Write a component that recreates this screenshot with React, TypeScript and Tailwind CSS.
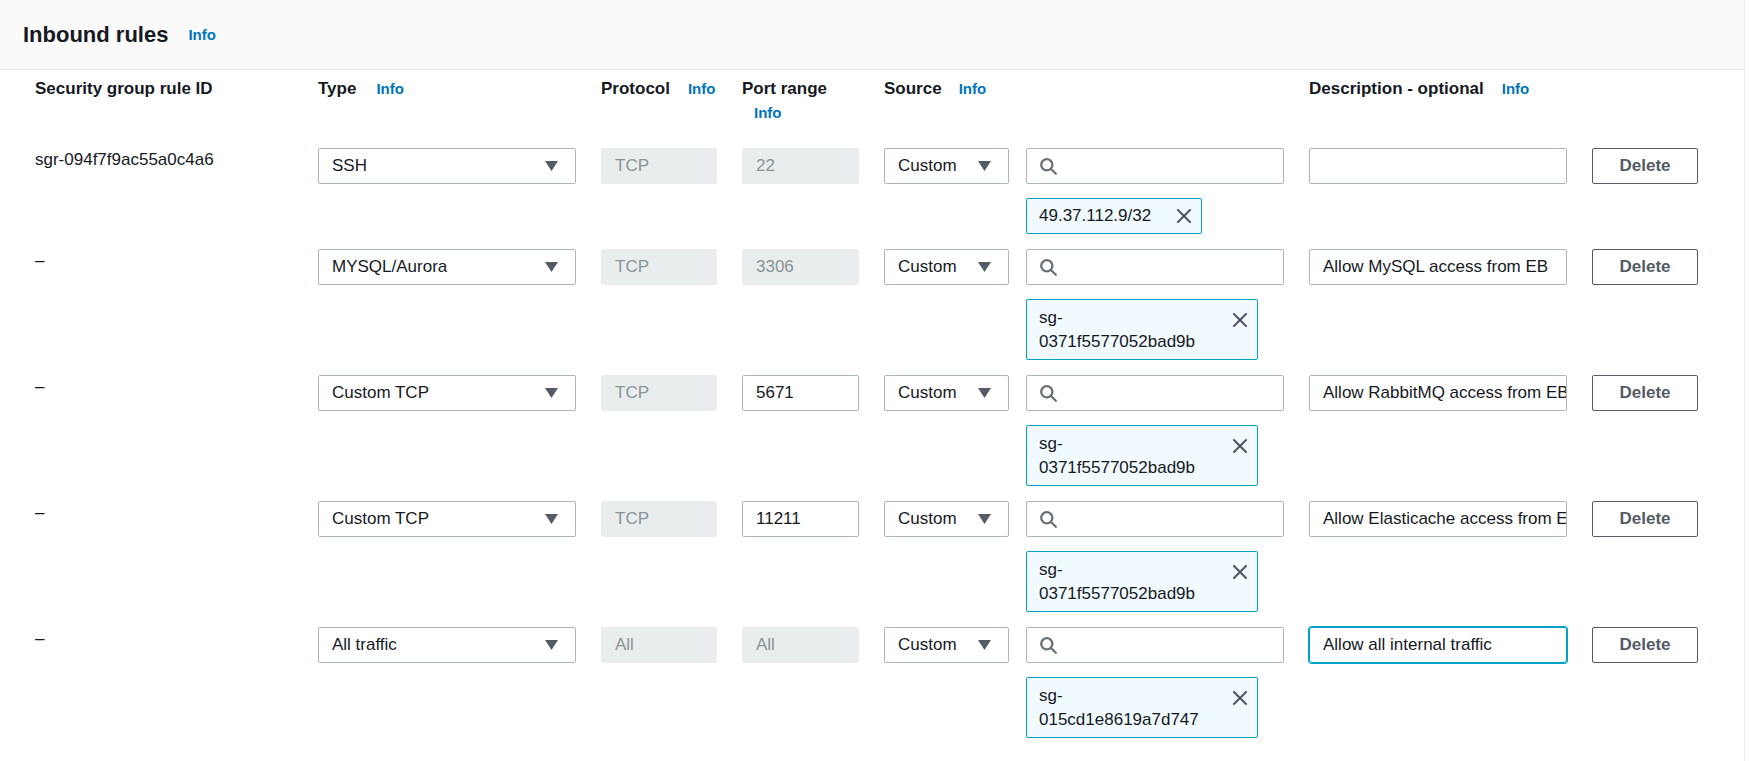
const rules = [
  { id: "sgr-094f7f9ac55a0c4a6", type: "SSH", protocol: "TCP", port: "22", portEditable: false, token: ["49.37.112.9/32"], desc: "", focused: false },
  { id: "–", type: "MYSQL/Aurora", protocol: "TCP", port: "3306", portEditable: false, token: ["sg-", "0371f5577052bad9b"], desc: "Allow MySQL access from EB", focused: false },
  { id: "–", type: "Custom TCP", protocol: "TCP", port: "5671", portEditable: true, token: ["sg-", "0371f5577052bad9b"], desc: "Allow RabbitMQ access from EB", focused: false },
  { id: "–", type: "Custom TCP", protocol: "TCP", port: "11211", portEditable: true, token: ["sg-", "0371f5577052bad9b"], desc: "Allow Elasticache access from EB", focused: false },
  { id: "–", type: "All traffic", protocol: "All", port: "All", portEditable: false, token: ["sg-", "015cd1e8619a7d747"], desc: "Allow all internal traffic", focused: true },
];

const grid = "grid grid-cols-[258px_258px_116px_117px_400px_258px_106px] gap-x-[25px]";

function Info({ className = "" }: { className?: string }) {
  return <span className={"text-[15px] font-bold text-[#0073bb] " + className}>Info</span>;
}

function Caret() {
  return (
    <svg width="13" height="10" viewBox="0 0 13 10" className="shrink-0">
      <polygon points="0,0 13,0 6.5,10" fill="#545b64" />
    </svg>
  );
}

function SearchIcon() {
  return (
    <svg width="19" height="19" viewBox="0 0 19 19" fill="none" stroke="#687078" strokeWidth="2.3" strokeLinecap="round">
      <circle cx="7.8" cy="7.8" r="5.6" />
      <line x1="12" y1="12" x2="16.8" y2="16.8" />
    </svg>
  );
}

function CloseIcon() {
  return (
    <svg width="16" height="16" viewBox="0 0 16 16" stroke="#545b64" strokeWidth="2.2" strokeLinecap="round" className="shrink-0">
      <line x1="2" y1="2" x2="14" y2="14" />
      <line x1="14" y1="2" x2="2" y2="14" />
    </svg>
  );
}

function Select({ value, width }: { value: string; width: string }) {
  return (
    <div className={"h-[36px] " + width + " border border-[#aab7b8] rounded-[2px] bg-white pl-[13px] pr-[17px] flex items-center justify-between"}>
      <span className="truncate">{value}</span>
      <Caret />
    </div>
  );
}

function Disabled({ value }: { value: string }) {
  return (
    <div className="h-[36px] rounded-[2px] bg-[#eaeded] border border-[#eaeded] px-[13px] flex items-center text-[#879596]">
      {value}
    </div>
  );
}

function Token({ lines }: { lines: string[] }) {
  if (lines.length === 1) {
    return (
      <div className="h-[36px] w-[176px] border border-[#00a1c9] rounded-[2px] bg-[#f1faff] pl-[12px] pr-[9px] flex items-center justify-between">
        <span>{lines[0]}</span>
        <CloseIcon />
      </div>
    );
  }
  return (
    <div className="h-[61px] w-[232px] border border-[#00a1c9] rounded-[2px] bg-[#f1faff] pl-[12px] pr-[9px] pt-[6px] flex justify-between">
      <div className="leading-[24px]">
        {lines.map((l, i) => (
          <div key={i}>{l}</div>
        ))}
      </div>
      <div className="pt-[6px]">
        <CloseIcon />
      </div>
    </div>
  );
}

export default function App() {
  return (
    <div className="min-h-screen bg-white text-[#16191f] text-[17px]" style={{ fontFamily: '"Liberation Sans", Arial, sans-serif' }}>
      <div className="w-[1745px] border-r border-[#eaeded] min-h-screen">
        <div className="h-[70px] bg-[#fafafa] border-b border-[#eaeded] px-[23px] flex items-center gap-[20px]">
          <h2 className="text-[22px] font-bold leading-none">Inbound rules</h2>
          <Info className="pt-[2px]" />
        </div>

        <div className={grid + " pl-[35px] pt-[7px] leading-[24px] font-bold"}>
          <div>Security group rule ID</div>
          <div className="flex items-baseline gap-[20px]">
            Type <Info />
          </div>
          <div className="flex items-baseline gap-[18px] whitespace-nowrap">
            Protocol <Info />
          </div>
          <div>
            <div>Port range</div>
            <Info className="ml-[12px]" />
          </div>
          <div className="flex items-baseline gap-[17px]">
            Source <Info />
          </div>
          <div className="flex items-baseline gap-[18px] whitespace-nowrap">
            Description - optional <Info />
          </div>
          <div />
        </div>

        <div className="pl-[35px] pt-[23px] flex flex-col gap-[15px]">
          {rules.map((r, i) => (
            <div key={i} className={grid + " items-start"}>
              <div className="leading-[24px]">{r.id}</div>
              <Select value={r.type} width="w-full" />
              <Disabled value={r.protocol} />
              {r.portEditable ? (
                <div className="h-[36px] border border-[#aab7b8] rounded-[2px] px-[13px] flex items-center">{r.port}</div>
              ) : (
                <Disabled value={r.port} />
              )}
              <div className="flex gap-[17px] items-start">
                <Select value="Custom" width="w-[125px]" />
                <div className="flex flex-col gap-[14px] w-[258px]">
                  <div className="h-[36px] border border-[#aab7b8] rounded-[2px] pl-[12px] flex items-center">
                    <SearchIcon />
                  </div>
                  <Token lines={r.token} />
                </div>
              </div>
              <div
                className={
                  "h-[36px] rounded-[2px] px-[13px] flex items-center overflow-hidden whitespace-nowrap " +
                  (r.focused
                    ? "border border-[#00a1c9] shadow-[0_0_0_1px_#00a1c9] rounded-[3px]"
                    : "border border-[#aab7b8]")
                }
              >
                {r.desc}
              </div>
              <button className="h-[36px] border border-[#545b64] rounded-[2px] font-bold text-[#545b64] bg-white">
                Delete
              </button>
            </div>
          ))}
        </div>
      </div>
    </div>
  );
}
